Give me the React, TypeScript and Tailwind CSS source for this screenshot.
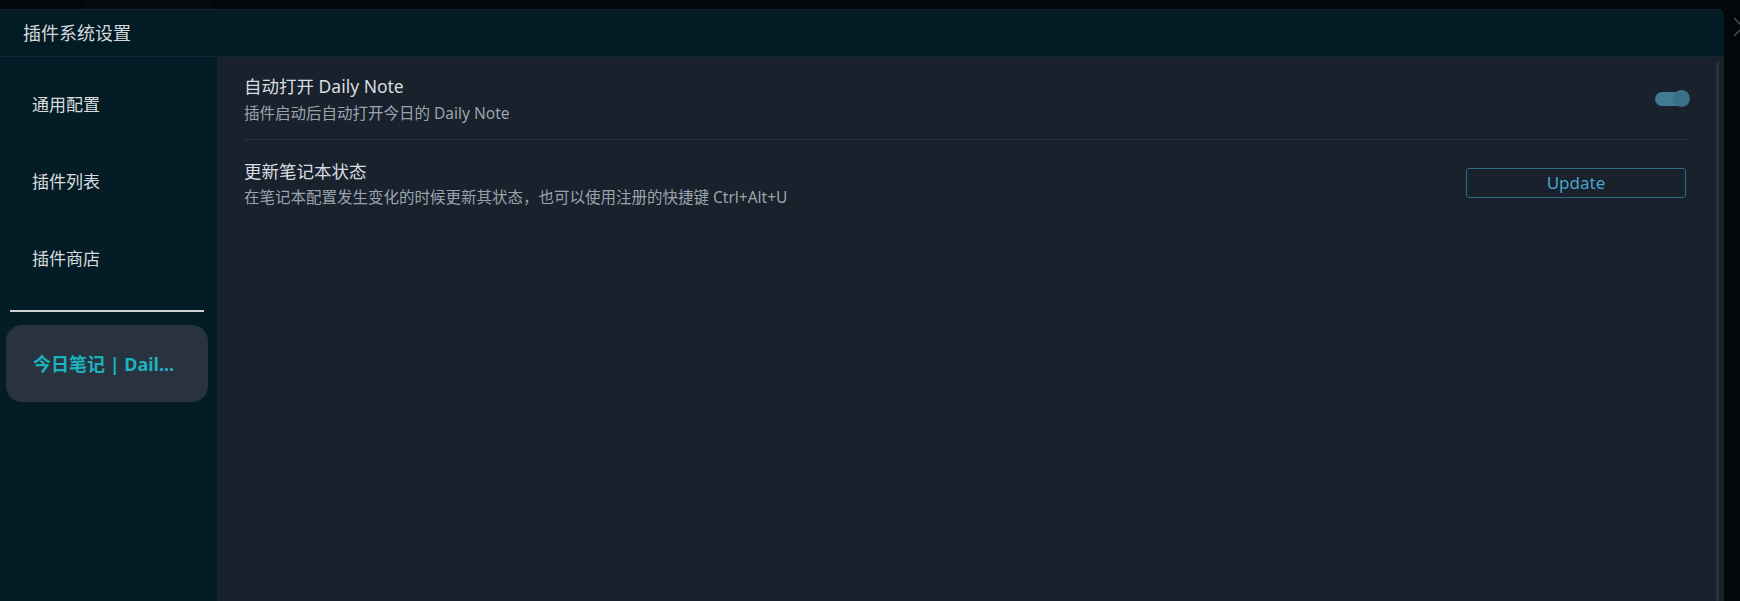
import React from "react";

const font = { fontFamily: '"Segoe UI","Noto Sans","Noto Sans CJK SC",sans-serif' };

function Toggle() {
  return (
    <div className="relative w-[35px] h-[17px] mr-[-4px] shrink-0">
      <div className="absolute left-0 right-[1px] top-[2px] h-[14px] rounded-full bg-[#417b93]" />
      <div className="absolute right-0 top-0 w-[17px] h-[17px] rounded-full bg-[#3a7189]" />
    </div>
  );
}

export default function App() {
  return (
    <div
      className="relative w-[1740px] h-[601px] overflow-hidden bg-[#040709] flex flex-col"
      style={font}
    >
      {/* top strip */}
      <div className="h-[9px] shrink-0 flex">
        <div className="w-[82px]" />
        <div className="w-[131px] bg-[#070a0d] border-b border-[#0c1014]" />
      </div>

      {/* close icon */}
      <svg
        className="absolute left-[1733px] top-[17px]"
        width="20"
        height="20"
        viewBox="0 0 20 20"
        fill="none"
        stroke="#3d4953"
        strokeWidth="1.6"
      >
        <path d="M1 1 L19 19 M19 1 L1 19" />
      </svg>

      {/* modal */}
      <div className="w-[1724px] flex-1 flex flex-col min-h-0 rounded-tr-[5px] overflow-hidden">
        <div className="h-[48px] shrink-0 bg-[#031b25] border-t border-[#0a2430] border-b border-b-[#0e2935] flex items-center pl-[23px]">
          <span className="text-[18px] leading-[24px] text-[#d6d9dc]">插件系统设置</span>
        </div>

        <div className="flex-1 flex min-h-0">
          {/* sidebar */}
          <div className="w-[217px] shrink-0 bg-[#041c26] pt-[9px] flex flex-col">
            <div className="h-[77px] flex items-center pl-[32px] text-[17px] text-[#d9dcdf]">通用配置</div>
            <div className="h-[77px] flex items-center pl-[32px] text-[17px] text-[#d9dcdf]">插件列表</div>
            <div className="h-[77px] flex items-center pl-[32px] text-[17px] text-[#d9dcdf]">插件商店</div>
            <div className="mt-[13px] ml-[10px] w-[194px] h-[2px] bg-[#cfd1d3]" />
            <div className="mt-[13px] ml-[6px] w-[202px] h-[77px] rounded-[16px] bg-[#29323f] flex items-center pl-[27px] pt-[2px]">
              <span className="text-[18px] font-bold text-[#1bb3bd] whitespace-nowrap">今日笔记 | Dail...</span>
            </div>
          </div>

          {/* content */}
          <div className="relative flex-1 bg-[#18212c] pl-[27px] pr-[38px]">
            <div className="absolute right-[5px] top-[5px] bottom-0 w-[3px] rounded-full bg-[#28323e]" />

            <div className="flex items-center justify-between pt-[16px] pb-[15px] border-b border-[#2a333e]">
              <div className="flex flex-col">
                <span className="text-[17.5px] leading-[26px] text-[#dadde0]">自动打开 Daily Note</span>
                <span className="mt-[3px] text-[15.5px] leading-[22px] text-[#9ba4ad]">插件启动后自动打开今日的 Daily Note</span>
              </div>
              <Toggle />
            </div>

            <div className="flex items-center justify-between pt-[18px]">
              <div className="flex flex-col">
                <span className="text-[17.5px] leading-[26px] text-[#dadde0]">更新笔记本状态</span>
                <span className="mt-[2px] text-[15.5px] leading-[22px] text-[#9ba4ad]">
                  在笔记本配置发生变化的时候更新其状态，也可以使用注册的快捷键 Ctrl+Alt+U
                </span>
              </div>
              <button className="w-[220px] h-[30px] rounded-[3px] border border-[#2d6a84] bg-transparent text-[17px] leading-[24px] text-[#4ba4c7] flex items-center justify-center">
                Update
              </button>
            </div>
          </div>
        </div>
      </div>
    </div>
  );
}
